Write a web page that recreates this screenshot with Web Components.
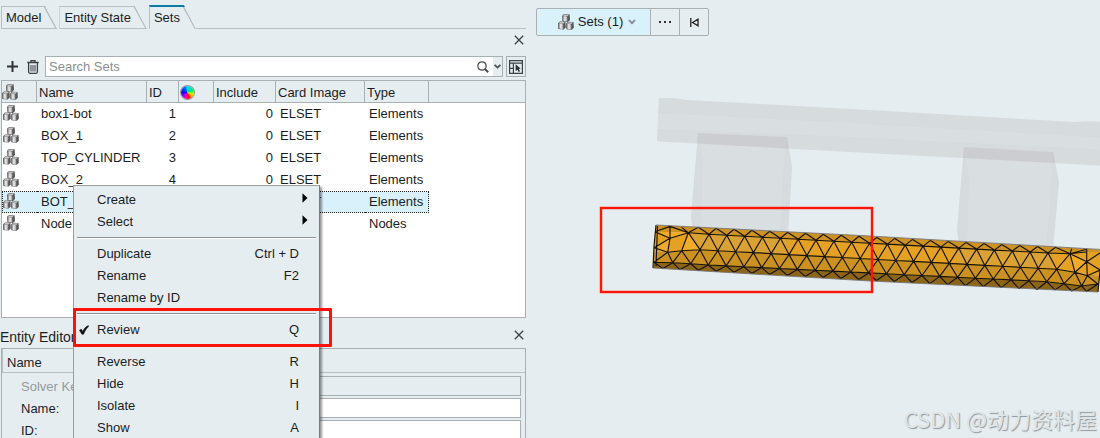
<!DOCTYPE html>
<html lang="en">
<head>
<meta charset="utf-8">
<title>Sets browser</title>
<style>
  html, body { margin: 0; height: 100%; }
  body {
    font: 13px/22px "Liberation Sans", Arial, sans-serif;
    color: #1b1d1f; background: #e5edf0; overflow: hidden;
    --bg: #e5edf0; --line: #a9b0b4; --soft: #b9c0c4; --pick: #d9f1fb;
  }
</style>
</head>
<body>
<app-shell></app-shell>

<script>
const define = (name, html, setup) => {
  const tpl = document.createElement('template');
  tpl.innerHTML = html;
  customElements.define(name, class extends HTMLElement {
    connectedCallback() {
      if (this.shadowRoot) return;
      const root = this.attachShadow({ mode: 'open' });
      root.append(tpl.content.cloneNode(true));
      if (setup) setup(this, root);
    }
  });
};

/* three stacked cubes */
const cube = (x, y) => `
  <path d="M${x} ${y + 1.6}L${x + 2} ${y}L${x + 7.4} ${y + .2}L${x + 7.8} ${y + 6}L${x + 5.6} ${y + 8}L${x + .3} ${y + 7.4}Z" fill="#565656"/>
  <path d="M${x + .5} ${y + 1.8}L${x + 2.2} ${y + .4}L${x + 7} ${y + .5}L${x + 5.2} ${y + 2.2}Z" fill="#c4c4c4"/>
  <path d="M${x + .3} ${y + 2}L${x + 5.2} ${y + 2.4}L${x + 5.3} ${y + 7.6}L${x + .5} ${y + 7}Z" fill="url(#g)"/>`;
define('cubes-icon', `
  <style>:host{display:inline-block;width:16px;height:16px;vertical-align:middle} svg{display:block}</style>
  <svg width="16" height="16" viewBox="0 0 16 16" aria-hidden="true">
    <defs><linearGradient id="g"><stop offset="0" stop-color="#6a6a6a"/><stop offset=".5" stop-color="#f4f4f4"/><stop offset="1" stop-color="#8c8c8c"/></linearGradient></defs>
    ${cube(4.2, 0)}${cube(0, 7.6)}${cube(8.1, 7.8)}
  </svg>`);

define('close-button', `
  <style>
    :host{display:block}
    button{display:block;border:0;padding:2px;background:none}
    svg{display:block}
  </style>
  <button aria-label="Close"><svg width="10" height="10" viewBox="0 0 10 10" fill="none" stroke="#3d4246" stroke-width="1.3"><path d="M.8 .8L9.2 9.2M9.2 .8L.8 9.2"/></svg></button>`);

define('ui-tab', `
  <style>
    :host{display:block;flex:none;margin-right:2px}
    button{position:relative;display:block;box-sizing:border-box;height:23px;margin:0;padding:0 16px 0 4px;
      border:solid var(--soft);border-width:1px 0 1px 1px;background:none;font:inherit;line-height:22px;color:inherit;
      clip-path:polygon(0 0,calc(100% - 12px) 0,100% 100%,0 100%)}
    svg{position:absolute;right:0;top:0;display:block}
    :host([active]) button{height:24px;border-top:2px solid #0a7ca6;border-bottom:0;line-height:20px}
    :host([active]){margin:0}
  </style>
  <button role="tab"><slot></slot><svg width="13" height="22" viewBox="0 0 13 22" fill="none" stroke="#b5bcc0" stroke-width="1.4"><path d="M.5 0L12.5 22"/></svg></button>`);

define('tab-bar', `
  <style>
    :host{display:flex;align-items:flex-end;height:29px}
    i{flex:1;border-bottom:1px solid var(--soft)}
  </style>
  <slot></slot><i></i>`);

define('search-bar', `
  <style>
    :host{display:flex;align-items:center;height:21px;padding-left:4px}
    button{display:flex;flex:none;align-items:center;justify-content:center;box-sizing:border-box;padding:0;border:0;background:none;height:21px}
    svg{display:block}
    .add{width:14px}.del{width:18px;margin:0 3px 0 5px;padding-right:1px}
    .box{flex:1;display:flex;box-sizing:border-box;height:21px;border:1px solid var(--line);background:#fff;min-width:0}
    input{flex:1;min-width:0;border:0;outline:0;padding:0 3px;margin:0;background:none;font:inherit;height:19px;line-height:19px}
    input::placeholder{color:#8b8f92;opacity:1}
    .find{width:20px;height:19px}.more{width:9px;height:19px;background:var(--bg)}
    .pane{width:20px;margin-left:3px;border:1px solid var(--line)}
  </style>
  <button class="add" aria-label="Add"><svg width="11" height="11" viewBox="0 0 11 11" stroke="#303437" stroke-width="2"><path d="M5.5 0V11M0 5.5H11"/></svg></button>
  <button class="del" aria-label="Delete"><svg width="12" height="14" viewBox="0 0 12 14" fill="none" stroke="#3b3f42"><path d="M.3 2.5H11.7M4 2V.7H8V2M1.6 3V11.8Q1.6 13.3 3 13.3H9Q10.4 13.3 10.4 11.8V3" stroke-width="1.3"/><path d="M4 5V11.5M6 5V11.5M8 5V11.5" stroke-width="1"/></svg></button>
  <span class="box">
    <input aria-label="Search Sets" placeholder="Search Sets">
    <button class="find" aria-label="Find"><svg width="12" height="12" viewBox="0 0 12 12" fill="none" stroke="#484d51"><circle cx="5" cy="5" r="4.2" stroke-width="1.2"/><path d="M8 8L11.2 11.2" stroke-width="2"/></svg></button>
    <button class="more" aria-label="Search options"><svg width="7" height="5" viewBox="0 0 7 5" fill="none" stroke="#4c5154" stroke-width="1.8"><path d="M.6 .8L3.5 3.6L6.4 .8"/></svg></button>
  </span>
  <button class="pane" aria-label="Columns"><svg width="14" height="14" viewBox="0 0 14 14"><path d="M.6 .6H13.4V13.4H.6ZM.6 3.2H13.4M4.4 3.2V13.4M.6 8.3H4.4" fill="none" stroke="#3d4246" stroke-width="1.2"/><path d="M6.6 4.3L11.6 8.6L9.9 9L11 11.3L9.6 12L8.5 9.7L6.6 11Z" fill="#303437"/></svg></button>`);

define('sets-table', `
  <style>
    :host{display:block;box-sizing:border-box;height:238px;background:#fff;border:1px solid var(--line)}
    table{width:100%;table-layout:fixed;border-spacing:0;border-collapse:separate}
    th,td{box-sizing:border-box;height:22px;padding:0;line-height:20px;font-weight:400;text-align:left;white-space:nowrap}
    th{padding:2px 0 0 2px;background:var(--bg);border-right:1px solid var(--line);border-bottom:1px solid var(--line);line-height:19px}
    th:last-child{border-right:0}
    th:first-child,td:first-child{padding-left:0}
    td{padding-left:4px;border:solid transparent;border-width:1px 0}
    td.n{padding:0 3px 0 0;text-align:right}
    cubes-icon{margin-top:-3px}
    td:first-child{padding-left:1px}
    .on td:first-child{padding-left:0}
    .on td:not(:last-child){background:var(--pick);border:dotted #222;border-width:1px 0}
    .on td:first-child{border-left-width:1px}
    .on td:nth-last-child(2){border-right-width:1px}
    .wheel{display:block;width:13px;height:13px;border-radius:50%;
      background:conic-gradient(#0df,#0e6 70deg,#bf0 100deg,#fa0 130deg,#f00 165deg,#f0a 200deg,#a0f 225deg,#10e 270deg,#06f 330deg,#0df);
      box-shadow:0 0 0 1px #777b}
  </style>
  <table>
    <colgroup><col style="width:35px"><col style="width:110px"><col style="width:32px"><col style="width:35px"><col style="width:62px"><col style="width:89px"><col style="width:64px"><col></colgroup>
    <thead><tr><th aria-label="Kind"><cubes-icon></cubes-icon></th><th>Name</th><th>ID</th><th aria-label="Color"><span class="wheel"></span></th><th>Include</th><th>Card Image</th><th>Type</th><th></th></tr></thead>
    <tbody></tbody>
  </table>`, (host, root) => {
  const rows = [
    ['box1-bot', '1', '0', 'ELSET', 'Elements'], ['BOX_1', '2', '0', 'ELSET', 'Elements'],
    ['TOP_CYLINDER', '3', '0', 'ELSET', 'Elements'], ['BOX_2', '4', '0', 'ELSET', 'Elements'],
    ['BOT_', '', '', 'ELSET', 'Elements'], ['Node', '', '', '', 'Nodes']];
  root.querySelector('tbody').innerHTML = rows.map((r, i) =>
    `<tr${i === 4 ? ' class="on"' : ''}><td><cubes-icon></cubes-icon></td><td>${r[0]}</td><td class="n">${r[1]}</td><td></td><td class="n">${r[2]}</td><td>${r[3]}</td><td>${r[4]}</td><td></td></tr>`).join('');
});

define('entity-editor', `
  <style>
    :host{display:flex;flex-direction:column;flex:1;min-height:0}
    header{display:flex;align-items:center;justify-content:space-between;height:31px}
    close-button{margin-top:4px}
    h2{margin:8px 0 0 -1px;font:inherit;font-size:14px}
    .box{flex:1;border:1px solid var(--line);border-bottom:0}
    .head{height:23px;padding-left:4px;line-height:27px;border-left:1px solid var(--soft);border-bottom:1px solid var(--soft)}
    .row{display:grid;grid-template-columns:100px 1fr;height:20px;margin:1px 4px 2px 19px;line-height:22px;align-items:center}
    label{padding-top:2px}
    input{box-sizing:border-box;width:100%;height:20px;margin:0;border:1px solid var(--line);background:#fff;font:inherit}
    .off{color:#94999c}.off input{background:var(--bg)}
    form{margin:0}
  </style>
  <header><h2>Entity Editor</h2><close-button></close-button></header>
  <form class="box">
    <div class="head">Name</div>
    <div class="row off"><label for="k">Solver Ke</label><input id="k" disabled></div>
    <div class="row"><label for="n">Name:</label><input id="n"></div>
    <div class="row"><label for="i">ID:</label><input id="i"></div>
  </form>`);

define('menu-item', `
  <style>
    :host{display:block}
    button{display:flex;align-items:center;width:100%;height:22px;padding:0 10px 0 4px;border:0;background:none;font:inherit;color:inherit;text-align:left}
    .c{width:18px}.l{flex:1}.k{margin-right:9px}
    svg{display:block}
    .c svg{visibility:hidden}
    .s{display:none}
    :host([checked]) .c svg{visibility:visible}
    :host([sub]) .s{display:block;margin-top:-5px}
    :host([sub]) .k{margin:0}
  </style>
  <button role="menuitem"><span class="c"><svg width="10" height="10" viewBox="0 0 10 10"><path d="M.5 5.2L2.4 4.2L3.7 6.4C5 3.8 6.8 1.8 9.3 .6L9.5 1.6C7.4 3.6 5.8 5.9 4.6 9.2H2.9Z" fill="#111" stroke="#111" stroke-width=".6"/></svg></span>
  <span class="l"><slot></slot></span><span class="k"></span>
  <svg class="s" width="6" height="10" viewBox="0 0 6 10"><path d="M.5 .3L5.5 5L.5 9.7Z" fill="#000"/></svg></button>`,
  (host, root) => { root.querySelector('.k').textContent = host.getAttribute('key') || ''; });

define('context-menu', `
  <style>
    :host{display:block;box-sizing:border-box;width:247px;padding:3px 1px 0;background:var(--bg);border:1px solid #9a9fa2;border-right-color:#777c80;
      box-shadow:2px 2px 2px #0006}
    ::slotted(hr){height:1px;margin:4px 2px;border:0;border-top:1px solid #8c9195;background:#fff}
  </style>
  <slot></slot>`);

define('view-toolbar', `
  <style>
    :host{display:flex}
    button{box-sizing:border-box;display:flex;flex:none;align-items:center;justify-content:center;height:28px;width:30px;margin:0 0 0 -1px;padding:0;
      border:1px solid var(--line);background:var(--bg);font:inherit;color:inherit;white-space:nowrap}
    .main{width:115px;margin:0;padding-left:7px;gap:4px;background:var(--pick);border-radius:2px 0 0 2px}
    .main svg{margin-left:1px}
    .last{border-radius:0 2px 2px 0}
    svg{display:block}
  </style>
  <button class="main"><cubes-icon></cubes-icon><span>Sets (1)</span><svg width="8" height="6" viewBox="0 0 8 6" fill="none" stroke="#7c8991" stroke-width="1.8"><path d="M1 1L4 4.2L7 1"/></svg></button>
  <button aria-label="More"><svg width="12" height="2"><path d="M0 0H2V2H0ZM5 0H7V2H5ZM10 0H12V2H10Z" fill="#333"/></svg></button>
  <button class="last" aria-label="Collapse"><svg width="9" height="9" viewBox="0 0 9 9" fill="none" stroke="#222" stroke-width="1.3"><path d="M.8 0V9M8 1.2V7.8L2.6 4.5Z"/></svg></button>`);

/* Model view: ghosted parts behind the reviewed, meshed cylinder */
define('model-view', `
  <style>
    :host{display:block;position:relative;overflow:hidden;min-width:0}
    view-toolbar{position:relative;margin-top:8px}
    svg{position:absolute;left:0;top:0;display:block;overflow:visible}
    p{position:absolute;right:3px;bottom:4px;margin:0;font:22px/32px "Noto Sans CJK SC",sans-serif;white-space:nowrap;
      color:#dfe4e7;text-shadow:1px 1px 1px #8f9699}
  </style>
  <svg width="564" height="438" viewBox="536 0 564 438" role="img" aria-label="Meshed cylinder">
    <g fill="#81686b" fill-opacity=".11">
      <path d="M659 98L675 98L687 100L870 110L1073 122L1090 121L1110 122V166L1090 165L850 152L668 142L657 141Z"/>
      <path d="M698 133L787 137L792 167L788 236L693 232L691 217Z"/>
      <path d="M964 147L1053 152L1059 182L1053 250L959 245L957 230Z"/>
    </g>
    <g fill="#81787b" fill-opacity=".03">
      <path d="M659 98L687 100L1110 124V138L850 123L657 113Z"/><path d="M657 129L850 137L1110 150V166L850 152L657 141Z"/>
      <path d="M698 133L703 160L701 236L693 232L691 217Z"/><path d="M787 137L792 167L788 236H780L784 160Z"/>
      <path d="M964 147L969 180L967 245L959 242L957 230Z"/><path d="M1053 152L1059 182L1053 248H1046L1051 190Z"/>
    </g>
    <g id="bands"></g>
    <path id="mesh" fill="none" stroke="#17130a" stroke-width="1.15" stroke-linejoin="round"/>
    <path d="M656 225L870 236L1110 250M653 268L870 281L1098 292" fill="none" stroke="#77777a" stroke-width=".9"/>
    <rect x="601" y="208" width="271" height="84" fill="none" stroke="#ff1408" stroke-width="2.4"/>
  </svg>
  <view-toolbar></view-toolbar>
  <p>CSDN @动力资料屋</p>`, (host, root) => {
  const N = 20;
  const run = (x, y, pitch, slope) => Array.from({ length: N }, (_, k) => [x + pitch * k, y + slope * pitch * k]);
  const A = run(698.3, 227.2, 17.86, .0569), B = run(709, 234.3, 17.84, .0552), C = run(700, 249.7, 17.8, .055),
        D = run(708.3, 265, 17.81, .0493), E = run(698.3, 270.3, 17.81, .0573);
  /* irregular ends of each ring of nodes */
  const b = [[688.3, 232.7], ...B, [1070, 253.7], [1086, 252]];
  const c = [[667.7, 252.3], [681.7, 250.7], ...C, [1056.7, 269.3], [1075, 272.3]];
  const d = [[654, 262.3], [672.7, 262.7], [690.7, 263.7], ...D, [1064, 283.7], [1081.7, 286], [1098, 284]];
  const P = a => a.map(p => p[0].toFixed(1) + ' ' + p[1].toFixed(1)).join('L');
  const hull = [[656.7, 225], [870, 236], [1100, 249.5]], base = [[653, 268], [870, 281], [1098, 292]];
  const bEdge = [[655, 231.7], ...b, [1102, 252]], cEdge = [[654, 251], ...c, [1102, 276]];
  const band = (u, l, f) => `<path d="M${P(u)}L${P([...l].reverse())}Z" fill="${f}"/>`;
  let fill = band(hull, bEdge, '#cd9222') + band(bEdge, cEdge, '#e4a124') + band(cEdge, d, '#cb9121') + band(d, base, '#8d6517');
  fill += '<path d="M693 233L789 238L788 254L695 249ZM958 247L1053 252V268L958 263Z" fill="#c9a354" fill-opacity=".35"/>';
  fill += '<path d="M656 232L688 233L670 238ZM688 233L700 250L682 251ZM1070 254L1087 262L1075 272ZM654 248L670 238L668 252Z" fill="#f0ac28"/>';
  root.querySelector('#bands').innerHTML = fill;
  let s = '';
  for (const ring of [b, c, d]) s += 'M' + P(ring);
  const zig = (o, i) => { for (let k = 0; k < N; k++) { s += 'M' + P([o[k], i[k]]); if (k) s += 'M' + P([i[k - 1], o[k]]); } };
  zig(A, B); zig(C, B); zig(C, D); zig(E, D);
  const hubL = [670, 238.3], hubR = [1086.7, 261.7], pB = [688.3, 232.7], qB = [1070, 253.7];
  const c0 = [667.7, 252.3], c1 = [681.7, 250.7], d0 = d[0], d1 = d[1], d2 = d[2];
  const links = [
    [[656, 225], [654, 246], [653, 268]], [[657.5, 226], [656, 266]],
    [[655, 231.7], [670, 226.4], pB], [[655, 231.7], hubL, pB, [681.7, 227.4]], [[670, 226.4], hubL, c0],
    [hubL, [654.3, 247.7], c0], [pB, A[0]], [pB, c1], [pB, C[0]],
    [d0, c0, d1, c1, d2, C[0], D[0]], [d0, [663, 268.6], d1, [680, 269.6], d2, E[0]],
    [B[19], [1055.5, 247.2], qB, [1071.7, 248.6]], [B[19], [1056.7, 269.3], qB, hubR, [1086.7, 249.3], qB], [B[19], C[19]],
    [qB, [1075, 272.3], hubR, [1087.3, 275.7], [1075, 272.3]], [[1100, 253], hubR, [1100, 270], [1087.3, 275.7]],
    [D[19], [1056.7, 269.3], [1064, 283.7], [1075, 272.3], [1081.7, 286], [1087.3, 275.7], [1098, 284]],
    [D[19], [1055, 289.9], [1064, 283.7], [1071.7, 291], [1081.7, 286], [1086.7, 291.6], [1098, 284]], [[1100, 270], [1098, 292]]];
  for (const l of links) s += 'M' + P(l);
  root.querySelector('#mesh').setAttribute('d', s);
});

define('app-shell', `
  <style>
    :host{display:grid;grid-template-columns:minmax(0,536fr) minmax(0,564fr);position:relative;height:100vh;overflow:hidden}
    main{display:flex;flex-direction:column;min-height:0;padding:0 10px 0 1px}
    .shut{display:flex;justify-content:flex-end;align-items:center;height:22px;margin-bottom:5px}
    sets-table{margin:3px 0 0}
    context-menu{position:absolute;left:73px;top:185px;bottom:-4px}
    .mark{position:absolute;left:73px;top:308px;box-sizing:border-box;width:259px;height:39px;border:3px solid #fb1208;border-radius:1px;pointer-events:none}
  </style>
  <main>
    <tab-bar role="tablist"><ui-tab>Model</ui-tab><ui-tab>Entity State</ui-tab><ui-tab active>Sets</ui-tab></tab-bar>
    <div class="shut"><close-button></close-button></div>
    <search-bar></search-bar>
    <sets-table></sets-table>
    <entity-editor></entity-editor>
  </main>
  <model-view></model-view>
  <context-menu role="menu">
    <menu-item sub>Create</menu-item><menu-item sub>Select</menu-item><hr>
    <menu-item key="Ctrl + D">Duplicate</menu-item><menu-item key="F2">Rename</menu-item><menu-item>Rename by ID</menu-item><hr>
    <menu-item checked key="Q">Review</menu-item><hr>
    <menu-item key="R">Reverse</menu-item><menu-item key="H">Hide</menu-item><menu-item key="I">Isolate</menu-item><menu-item key="A">Show</menu-item>
  </context-menu>
  <div class="mark"></div>`);
</script>
</body>
</html>
